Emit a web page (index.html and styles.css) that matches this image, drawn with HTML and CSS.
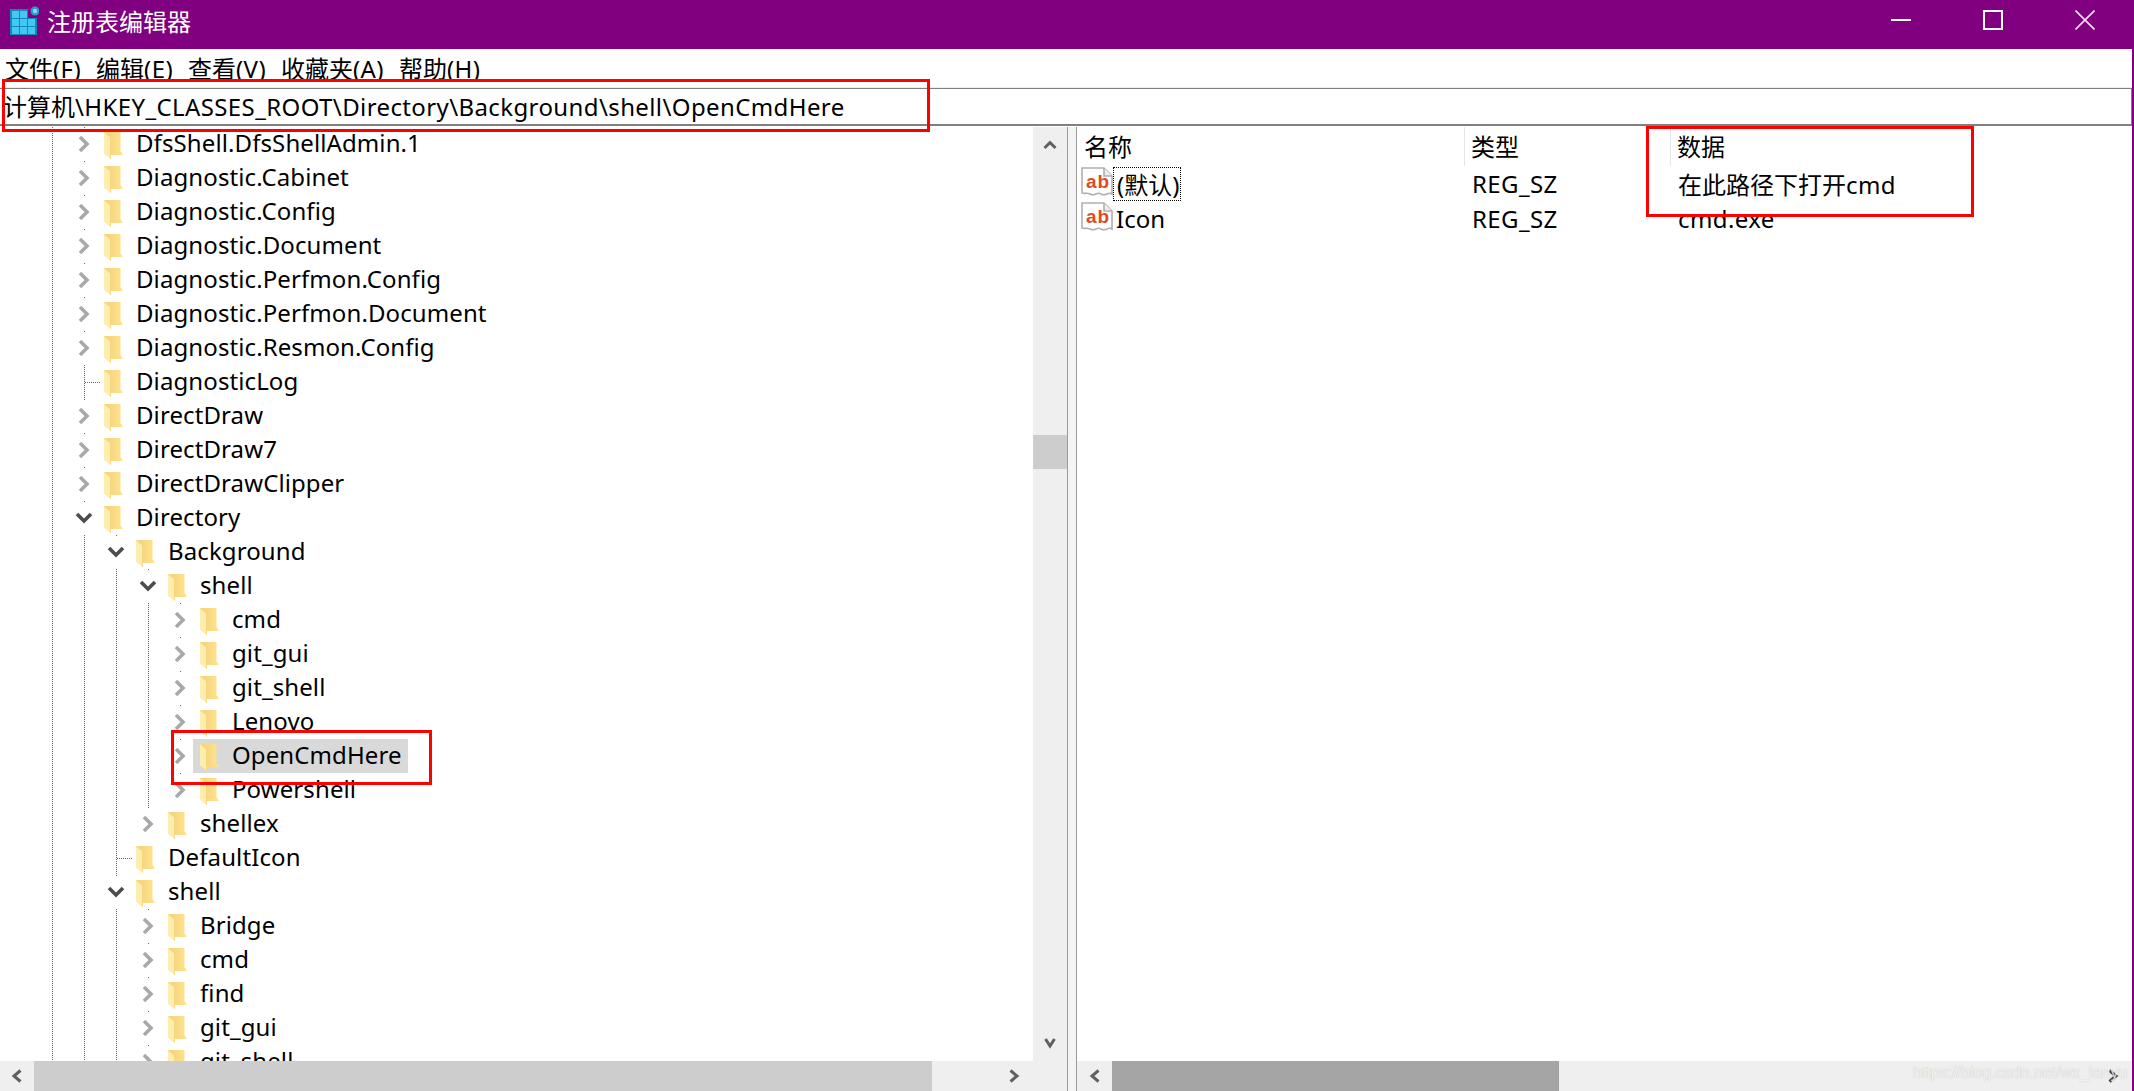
FILE: index.html
```html
<!DOCTYPE html>
<html lang="zh-CN">
<head>
  <meta charset="UTF-8" />
  <title>注册表编辑器</title>
  <link rel="stylesheet" href="styles.css">
</head>
<body>
  <svg class="defs" width="0" height="0">
    <defs>
      <linearGradient id="folder-fill" x1="0" x2="1" y1="0" y2="0">
        <stop offset="0" stop-color="#f3cf78" />
        <stop offset="1" stop-color="#ffe48e" />
      </linearGradient>
      <symbol id="folder" viewBox="0 0 19 27">
        <path d="M0 0H16.500V19.500L18.500 22V23L7 23V27L0 21Z" fill="url(#folder-fill)" />
        <path d="M0 0L6 5.500V26.500L0 21Z" fill="#ffedae" />
        <path d="M0 0H6L6.500 5.500Z" fill="#f6d683" />
      </symbol>
      <symbol id="chev-right" viewBox="0 0 12 18">
        <path d="M2 2L9 9L2 16" fill="none" stroke="#a9a9a9" stroke-width="3.600" />
      </symbol>
      <symbol id="chev-down" viewBox="0 0 18 12">
        <path d="M2 2L9 9L16 2" fill="none" stroke="#4d4d4d" stroke-width="3.600" />
      </symbol>
      <symbol id="ab-page" viewBox="0 0 32 32">
        <path d="M1 1H23L31 9V27C27 24 25 30 20 27C16 24 14 30 9 27C6 25.500 4 27 1 26Z" fill="#fff" stroke="#b0b0b0" stroke-width="1.600" />
        <path d="M23 1V9H31" fill="#eee" stroke="#b0b0b0" stroke-width="1.600" />
        <text x="5" y="21" class="ab-text">ab</text>
      </symbol>
    </defs>
  </svg>

  <div class="window">
    <div class="titlebar">
      <svg class="app-icon" width="30" height="30" viewBox="0 0 30 30">
        <rect x="1" y="4" width="27" height="27" fill="#1487bb" />
        <rect x="19" y="3" width="11" height="10" fill="#800080" />
        <g fill="#41c8f5">
          <rect x="3" y="6" width="7" height="7" />
          <rect x="11" y="6" width="7" height="7" />
          <rect x="3" y="14" width="7" height="7" />
          <rect x="11" y="14" width="7" height="7" />
          <rect x="19" y="14" width="7" height="7" />
          <rect x="3" y="22" width="7" height="7" />
          <rect x="11" y="22" width="7" height="7" />
          <rect x="19" y="22" width="7" height="7" />
        </g>
        <circle cx="26" cy="6" r="4.500" fill="#2a9cc8" />
        <circle cx="26" cy="6" r="2.200" fill="#7fdcf5" />
      </svg>
      <div class="title-text">注册表编辑器</div>
      <div class="win-btn">
        <svg width="20" height="20" viewBox="0 0 20 20"><path d="M0 10H20" stroke="#fff" stroke-width="2" /></svg>
      </div>
      <div class="win-btn">
        <svg width="20" height="20" viewBox="0 0 20 20"><rect x="1" y="1" width="18" height="18" fill="none" stroke="#fff" stroke-width="2" /></svg>
      </div>
      <div class="win-btn">
        <svg width="20" height="20" viewBox="0 0 20 20"><path d="M0.500 0.500L19.500 19.500M19.500 0.500L0.500 19.500" stroke="#f4e6f4" stroke-width="1.600" /></svg>
      </div>
    </div>

    <div class="menubar">
      <span><b>文件</b>(F)</span>
      <span><b>编辑</b>(E)</span>
      <span><b>查看</b>(V)</span>
      <span><b>收藏夹</b>(A)</span>
      <span><b>帮助</b>(H)</span>
    </div>

    <div class="addressbar"><b>计算机</b>\HKEY_CLASSES_ROOT\Directory\Background\shell\OpenCmdHere</div>

    <div class="panes">
      <div class="tree-pane">
        <div class="tree-main">
          <div class="tree">
            <div class="row"><i class="g"></i><i class="tw"><svg class="cr"><use href="#chev-right" /></svg></i><div class="item"><svg class="fd"><use href="#folder" /></svg>DfsShell.DfsShellAdmin.1</div></div>
            <div class="row"><i class="g"></i><i class="tw"><svg class="cr"><use href="#chev-right" /></svg></i><div class="item"><svg class="fd"><use href="#folder" /></svg>Diagnostic.Cabinet</div></div>
            <div class="row"><i class="g"></i><i class="tw"><svg class="cr"><use href="#chev-right" /></svg></i><div class="item"><svg class="fd"><use href="#folder" /></svg>Diagnostic.Config</div></div>
            <div class="row"><i class="g"></i><i class="tw"><svg class="cr"><use href="#chev-right" /></svg></i><div class="item"><svg class="fd"><use href="#folder" /></svg>Diagnostic.Document</div></div>
            <div class="row"><i class="g"></i><i class="tw"><svg class="cr"><use href="#chev-right" /></svg></i><div class="item"><svg class="fd"><use href="#folder" /></svg>Diagnostic.Perfmon.Config</div></div>
            <div class="row"><i class="g"></i><i class="tw"><svg class="cr"><use href="#chev-right" /></svg></i><div class="item"><svg class="fd"><use href="#folder" /></svg>Diagnostic.Perfmon.Document</div></div>
            <div class="row"><i class="g"></i><i class="tw"><svg class="cr"><use href="#chev-right" /></svg></i><div class="item"><svg class="fd"><use href="#folder" /></svg>Diagnostic.Resmon.Config</div></div>
            <div class="row"><i class="g"></i><i class="leaf"></i><div class="item"><svg class="fd"><use href="#folder" /></svg>DiagnosticLog</div></div>
            <div class="row"><i class="g"></i><i class="tw"><svg class="cr"><use href="#chev-right" /></svg></i><div class="item"><svg class="fd"><use href="#folder" /></svg>DirectDraw</div></div>
            <div class="row"><i class="g"></i><i class="tw"><svg class="cr"><use href="#chev-right" /></svg></i><div class="item"><svg class="fd"><use href="#folder" /></svg>DirectDraw7</div></div>
            <div class="row"><i class="g"></i><i class="tw"><svg class="cr"><use href="#chev-right" /></svg></i><div class="item"><svg class="fd"><use href="#folder" /></svg>DirectDrawClipper</div></div>
            <div class="row"><i class="g"></i><i class="tw"><svg class="cd"><use href="#chev-down" /></svg></i><div class="item"><svg class="fd"><use href="#folder" /></svg>Directory</div></div>
            <div class="row"><i class="g"></i><i class="g"></i><i class="tw"><svg class="cd"><use href="#chev-down" /></svg></i><div class="item"><svg class="fd"><use href="#folder" /></svg>Background</div></div>
            <div class="row"><i class="g"></i><i class="g"></i><i class="g"></i><i class="tw"><svg class="cd"><use href="#chev-down" /></svg></i><div class="item"><svg class="fd"><use href="#folder" /></svg>shell</div></div>
            <div class="row"><i class="g"></i><i class="g"></i><i class="g"></i><i class="g"></i><i class="tw"><svg class="cr"><use href="#chev-right" /></svg></i><div class="item"><svg class="fd"><use href="#folder" /></svg>cmd</div></div>
            <div class="row"><i class="g"></i><i class="g"></i><i class="g"></i><i class="g"></i><i class="tw"><svg class="cr"><use href="#chev-right" /></svg></i><div class="item"><svg class="fd"><use href="#folder" /></svg>git_gui</div></div>
            <div class="row"><i class="g"></i><i class="g"></i><i class="g"></i><i class="g"></i><i class="tw"><svg class="cr"><use href="#chev-right" /></svg></i><div class="item"><svg class="fd"><use href="#folder" /></svg>git_shell</div></div>
            <div class="row"><i class="g"></i><i class="g"></i><i class="g"></i><i class="g"></i><i class="tw"><svg class="cr"><use href="#chev-right" /></svg></i><div class="item"><svg class="fd"><use href="#folder" /></svg>Lenovo</div></div>
            <div class="row"><i class="g"></i><i class="g"></i><i class="g"></i><i class="g"></i><i class="tw"><svg class="cr"><use href="#chev-right" /></svg></i><div class="item selected"><svg class="fd"><use href="#folder" /></svg>OpenCmdHere</div></div>
            <div class="row"><i class="g"></i><i class="g"></i><i class="g"></i><i class="g"></i><i class="tw"><svg class="cr"><use href="#chev-right" /></svg></i><div class="item"><svg class="fd"><use href="#folder" /></svg>Powershell</div></div>
            <div class="row"><i class="g"></i><i class="g"></i><i class="g"></i><i class="tw"><svg class="cr"><use href="#chev-right" /></svg></i><div class="item"><svg class="fd"><use href="#folder" /></svg>shellex</div></div>
            <div class="row"><i class="g"></i><i class="g"></i><i class="leaf"></i><div class="item"><svg class="fd"><use href="#folder" /></svg>DefaultIcon</div></div>
            <div class="row"><i class="g"></i><i class="g"></i><i class="tw"><svg class="cd"><use href="#chev-down" /></svg></i><div class="item"><svg class="fd"><use href="#folder" /></svg>shell</div></div>
            <div class="row"><i class="g"></i><i class="g"></i><i class="g"></i><i class="tw"><svg class="cr"><use href="#chev-right" /></svg></i><div class="item"><svg class="fd"><use href="#folder" /></svg>Bridge</div></div>
            <div class="row"><i class="g"></i><i class="g"></i><i class="g"></i><i class="tw"><svg class="cr"><use href="#chev-right" /></svg></i><div class="item"><svg class="fd"><use href="#folder" /></svg>cmd</div></div>
            <div class="row"><i class="g"></i><i class="g"></i><i class="g"></i><i class="tw"><svg class="cr"><use href="#chev-right" /></svg></i><div class="item"><svg class="fd"><use href="#folder" /></svg>find</div></div>
            <div class="row"><i class="g"></i><i class="g"></i><i class="g"></i><i class="tw"><svg class="cr"><use href="#chev-right" /></svg></i><div class="item"><svg class="fd"><use href="#folder" /></svg>git_gui</div></div>
            <div class="row"><i class="g"></i><i class="g"></i><i class="g"></i><i class="tw"><svg class="cr"><use href="#chev-right" /></svg></i><div class="item"><svg class="fd"><use href="#folder" /></svg>git_shell</div></div>
          </div>
          <div class="vscroll">
            <div class="sb-arrow">
              <svg width="14" height="10" viewBox="0 0 14 10"><path d="M1.500 8L7 2.500L12.500 8" fill="none" stroke="#606060" stroke-width="3" /></svg>
            </div>
            <div class="vtrack"><div class="vthumb"></div></div>
            <div class="sb-arrow">
              <svg width="12" height="12" viewBox="0 0 12 12"><path d="M1.500 2L6 9L10.500 2" fill="none" stroke="#606060" stroke-width="3" /></svg>
            </div>
          </div>
        </div>
        <div class="hscroll">
          <div class="hs-btn">
            <svg width="12" height="14" viewBox="0 0 12 14"><path d="M9.500 1.500L3 7L9.500 12.500" fill="none" stroke="#606060" stroke-width="3" /></svg>
          </div>
          <div class="hthumb tree-thumb"></div>
          <div class="htrack">
            <svg width="12" height="14" viewBox="0 0 12 14"><path d="M2.500 1.500L9 7L2.500 12.500" fill="none" stroke="#606060" stroke-width="3" /></svg>
          </div>
        </div>
      </div>

      <div class="splitter"></div>

      <div class="list-pane">
        <div class="list">
          <div class="list-row list-head">
            <div class="head-cell"><b>名称</b></div>
            <div class="head-cell"><b>类型</b></div>
            <div class="head-cell last"><b>数据</b></div>
          </div>
          <div class="list-row">
            <div class="name-cell"><svg class="ab"><use href="#ab-page" /></svg><span class="focus">(<b>默认</b>)</span></div>
            <div class="cell">REG_SZ</div>
            <div class="cell"><b>在此路径下打开</b>cmd</div>
          </div>
          <div class="list-row">
            <div class="name-cell"><svg class="ab"><use href="#ab-page" /></svg><span class="plain">Icon</span></div>
            <div class="cell">REG_SZ</div>
            <div class="cell">cmd.exe</div>
          </div>
        </div>
        <div class="hscroll">
          <div class="hs-btn list-btn">
            <svg width="12" height="14" viewBox="0 0 12 14"><path d="M9.500 1.500L3 7L9.500 12.500" fill="none" stroke="#606060" stroke-width="3" /></svg>
          </div>
          <div class="hthumb list-thumb"></div>
          <div class="htrack">
            <svg width="12" height="14" viewBox="0 0 12 14"><path d="M2.500 1.500L9 7L2.500 12.500" fill="none" stroke="#404040" stroke-width="3" /></svg>
          </div>
        </div>
      </div>
    </div>
  </div>

  <!-- annotations drawn over the screenshot -->
  <div class="mark mark-address"></div>
  <div class="mark mark-key"></div>
  <div class="mark mark-data"></div>
  <div class="watermark">https://blog.csdn.net/wx_lanyu</div>
</body>
</html>
```

FILE: styles.css
```css
body {
  margin: 0;
  width: 2134px;
  height: 1091px;
  overflow: hidden;
  position: relative;
  background: #fff;
  color: #000;
  font-family: "Noto Sans", "Noto Sans CJK SC", sans-serif;
  font-size: 24px;
}
b {
  font-family: "Noto Sans CJK SC", sans-serif;
  font-weight: 400;
  font-size: 24px;
  letter-spacing: 0;
}
.defs {
  display: block;
  height: 0;
}
.window {
  height: 1091px;
  display: flex;
  flex-direction: column;
  border-right: 2px solid #800080;
}

/* title bar */
.titlebar {
  height: 49px;
  flex: none;
  margin-right: -2px;
  background: #800080;
  display: flex;
  align-items: flex-start;
  padding-right: 3px;
}
.app-icon {
  margin: 5px 0 0 9px;
  flex: none;
}
.title-text {
  flex: 1;
  margin-left: 8px;
  color: #fff;
  font-family: "Noto Sans CJK SC", sans-serif;
  font-size: 24px;
  line-height: 42px;
}
.win-btn {
  width: 92px;
  height: 40px;
  display: flex;
  align-items: center;
  justify-content: center;
}

/* menu + address */
.menubar {
  height: 39px;
  flex: none;
  display: flex;
  gap: 15px;
  padding-left: 5px;
  line-height: 37px;
  letter-spacing: 0.4px;
  border-bottom: 1px solid #ededed;
  box-sizing: border-box;
}
.addressbar {
  height: 38px;
  flex: none;
  box-sizing: border-box;
  border-top: 1px solid #808080;
  border-bottom: 2px solid #808080;
  border-right: 1px solid #808080;
  padding-left: 3px;
  line-height: 34px;
  letter-spacing: 0.39px;
  white-space: nowrap;
}

/* panes */
.panes {
  flex: 1;
  min-height: 0;
  display: flex;
  padding-top: 1px;
}
.tree-pane {
  width: 1067px;
  flex: none;
  display: flex;
  flex-direction: column;
}
.tree-main {
  flex: 1;
  min-height: 0;
  display: flex;
}
.tree {
  flex: 1;
  overflow: hidden;
  padding-left: 36px;
}
.row {
  height: 34px;
  display: flex;
  align-items: stretch;
  white-space: nowrap;
}
.g, .tw, .leaf {
  width: 32px;
  flex: none;
  display: flex;
  align-items: center;
  justify-content: center;
}
.g {
  background: linear-gradient(#666 50%, transparent 50%) 15.5px 0 / 1px 2px repeat-y;
}
.tw {
  background: linear-gradient(#666, #666) 15.5px 0 / 1px 1px no-repeat;
}
.leaf {
  justify-content: flex-end;
  background: linear-gradient(#666 50%, transparent 50%) 15.5px 0 / 1px 2px repeat-y;
}
.leaf::after {
  content: "";
  width: 15px;
  height: 1px;
  background: linear-gradient(90deg, #666 50%, transparent 50%) 0 0 / 2px 1px repeat-x;
}
.cr {
  width: 12px;
  height: 18px;
}
.cd {
  width: 18px;
  height: 12px;
}
.item {
  margin-left: -3px;
  padding: 0 6px 0 7px;
  display: flex;
  align-items: flex-start;
  line-height: 32px;
  letter-spacing: 0.1px;
}
.selected {
  background: #d9d9d9;
}
.fd {
  width: 19px;
  height: 27px;
  margin: 5px 13px 0 0;
  flex: none;
}

/* scrollbars */
.vscroll {
  width: 34px;
  flex: none;
  background: #efefef;
  display: flex;
  flex-direction: column;
}
.sb-arrow {
  height: 36px;
  flex: none;
  display: flex;
  align-items: center;
  justify-content: center;
}
.vtrack {
  flex: 1;
  padding-top: 272px;
}
.vthumb {
  height: 34px;
  background: #cdcdcd;
}
.hscroll {
  height: 30px;
  flex: none;
  display: flex;
  background: #efefef;
}
.hs-btn {
  width: 34px;
  flex: none;
  display: flex;
  align-items: center;
  justify-content: center;
}
.list-btn {
  width: 35px;
}
.hthumb {
  flex: none;
}
.tree-thumb {
  width: 898px;
  background: #cdcdcd;
}
.list-thumb {
  width: 447px;
  background: #a5a5a5;
}
.htrack {
  flex: 1;
  display: flex;
  align-items: center;
  justify-content: flex-end;
  padding-right: 47px;
}
.list-pane .htrack {
  padding-right: 13px;
}

.splitter {
  width: 8px;
  flex: none;
  border-left: 1px solid #9a9a9a;
  border-right: 1px solid #9a9a9a;
  background: #f4f4f4;
}

/* value list */
.list-pane {
  flex: 1;
  min-width: 0;
  display: flex;
  flex-direction: column;
}
.list {
  flex: 1;
}
.list-row {
  display: grid;
  grid-template-columns: 388px 206px 1fr;
  height: 35px;
  line-height: 33px;
}
.list-head {
  height: 40px;
  line-height: 38px;
}
.head-cell {
  padding-left: 7px;
  height: 39px;
  border-right: 1px solid #e5e5e5;
  box-sizing: border-box;
}
.head-cell + .head-cell {
  padding-left: 6px;
}
.head-cell.last {
  border-right: 0;
}
.cell {
  padding-left: 7px;
  letter-spacing: 0.4px;
}
.name-cell {
  display: flex;
  align-items: flex-start;
  padding-left: 4px;
}
.ab {
  width: 32px;
  height: 32px;
  flex: none;
}
.ab-text {
  font-family: "Liberation Sans", sans-serif;
  font-size: 19px;
  font-weight: 700;
  letter-spacing: 1px;
  fill: #e04a26;
}
.focus {
  outline: 1px dotted #000;
  outline-offset: -1px;
  padding: 0 2px 0 4px;
  height: 34px;
  line-height: 33px;
}
.plain {
  padding-left: 3px;
}

/* red annotation boxes */
.mark {
  position: absolute;
  box-sizing: border-box;
  border: 3px solid #ff0000;
}
.mark-address {
  left: 2px;
  top: 79px;
  width: 928px;
  height: 53px;
}
.mark-key {
  left: 171px;
  top: 730px;
  width: 261px;
  height: 55px;
}
.mark-data {
  left: 1646px;
  top: 126px;
  width: 328px;
  height: 91px;
}
.watermark {
  position: absolute;
  left: 1913px;
  top: 1063px;
  font-family: "Liberation Sans", sans-serif;
  font-size: 16px;
  line-height: 20px;
  color: rgba(255, 255, 255, 0.8);
  text-shadow: 0 0 1px rgba(120, 120, 120, 0.5);
}
```
